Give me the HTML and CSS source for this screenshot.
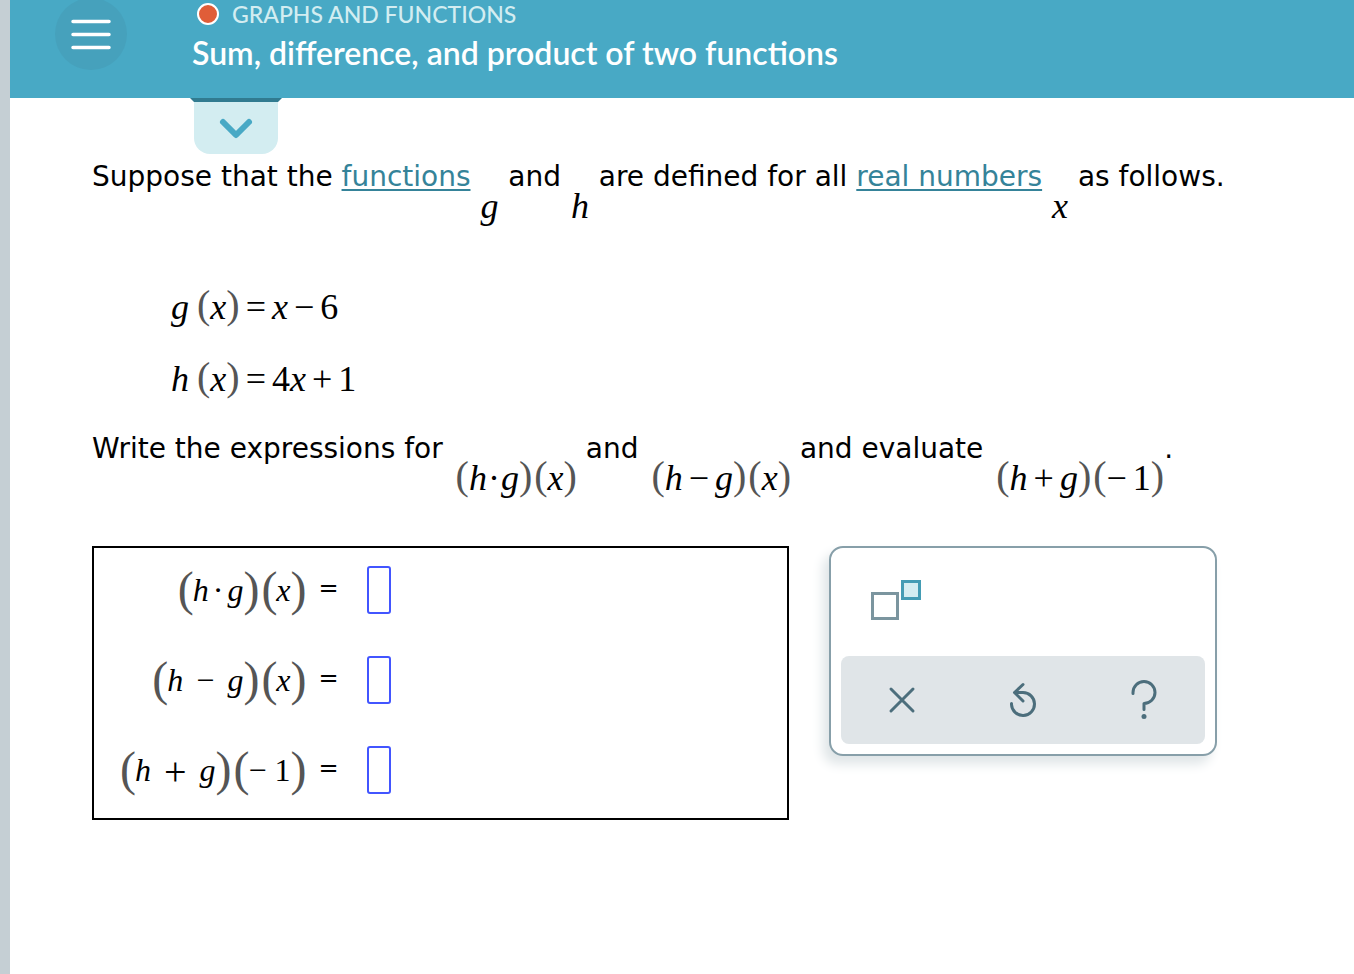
FILE: index.html
```html
<!DOCTYPE html>
<html lang="en">
<head>
    <meta charset="UTF-8">
    <meta name="viewport" content="width=device-width, initial-scale=1.0">
    <title>Sum, difference, and product of two functions</title>
    <link rel="stylesheet" href="styles.css">
</head>
<body>
    <!-- Top bar with menu and topic name -->
    <header class="topbar">
        <button class="menu-btn" type="button" aria-label="Menu">
            <svg width="40" height="32" viewBox="0 0 40 32" fill="none" stroke="#fff" stroke-width="3.500" stroke-linecap="round">
                <path d="M2 3.500h36M2 16.500h36M2 29.500h36"/>
            </svg>
        </button>
        <div class="heading">
            <div class="topic"><span class="dot"></span>GRAPHS AND FUNCTIONS</div>
            <h1 class="title">Sum, difference, and product of two functions</h1>
        </div>
    </header>

    <main class="content">
        <!-- Pull-down tab -->
        <button class="tab" type="button" aria-label="Show more">
            <svg width="92" height="56" viewBox="0 0 92 56">
                <path d="M4 2h84v38a16 16 0 0 1-16 16H20a16 16 0 0 1-16-16z" fill="#d3edf1"/>
                <path d="M0 0h92l-4 4H4z" fill="#317b90"/>
                <path d="M33 24l13 13 13-13" fill="none" stroke="#48a9c5" stroke-width="6" stroke-linecap="round" stroke-linejoin="round"/>
            </svg>
        </button>

        <p class="text">Suppose that the <a href="#functions">functions</a> <span class="math low var"><i>g</i></span> and <span class="math low var"><i>h</i></span> are defined for all <a href="#real-numbers">real numbers</a> <span class="math low var"><i>x</i></span> as follows.</p>

        <!-- Function definitions -->
        <div class="definitions">
            <div class="math"><i class="name">g</i><span class="paren">(</span><i>x</i><span class="paren">)</span><span class="op">=</span><i>x</i><span class="op">−</span>6</div>
            <div class="math"><i class="name">h</i><span class="paren">(</span><i>x</i><span class="paren">)</span><span class="op">=</span>4<i>x</i><span class="op">+</span>1</div>
        </div>

        <p class="text">Write the expressions for <span class="math low"><span class="paren">(</span><i>h</i><span class="times">·</span><i>g</i><span class="paren">)</span><span class="paren next">(</span><i>x</i><span class="paren">)</span></span> and <span class="math low"><span class="paren">(</span><i>h</i><span class="op">−</span><i>g</i><span class="paren">)</span><span class="paren next">(</span><i>x</i><span class="paren">)</span></span> and evaluate <span class="math low"><span class="paren">(</span><i>h</i><span class="op">+</span><i>g</i><span class="paren">)</span><span class="paren next">(</span><span class="sign">−</span>1<span class="paren">)</span></span>.</p>

        <div class="workspace">
            <!-- Answer fields -->
            <form class="answers">
                <label class="math" for="product"><span class="paren open">(</span><i>h</i><span class="times">·</span><i>g</i><span class="paren">)</span><span class="paren open next">(</span><i>x</i><span class="paren">)</span></label>
                <span class="equals">=</span>
                <input class="answer" id="product" type="text">

                <label class="math" for="difference"><span class="paren open">(</span><i>h</i><span class="op">−</span><i>g</i><span class="paren">)</span><span class="paren open next">(</span><i>x</i><span class="paren">)</span></label>
                <span class="equals">=</span>
                <input class="answer" id="difference" type="text">

                <label class="math" for="sum"><span class="paren open">(</span><i>h</i><span class="op plus">+</span><i>g</i><span class="paren">)</span><span class="paren open next">(</span><span class="sign">−</span>1<span class="paren">)</span></label>
                <span class="equals">=</span>
                <input class="answer" id="sum" type="text">
            </form>

            <!-- Input palette -->
            <aside class="palette">
                <button class="exponent" type="button" aria-label="Exponent">
                    <svg width="50" height="40" viewBox="0 0 50 40" stroke-width="3">
                        <rect x="1.500" y="13.500" width="25" height="25" fill="#fff" stroke="#7b959f"/>
                        <rect x="31.500" y="1.500" width="17" height="17" fill="#d3edf1" stroke="#439cb4"/>
                    </svg>
                </button>
                <div class="actions">
                    <button type="button" aria-label="Clear">
                        <svg width="40" height="44" viewBox="0 0 40 44"><path d="M9 11l22 22M31 11L9 33"/></svg>
                    </button>
                    <button type="button" aria-label="Undo">
                        <svg width="40" height="44" viewBox="0 0 40 44"><path d="M20 6.500l-8.500 8 8.500 8.500M11.500 14.500h8.500a11.500 11.500 0 1 1-11.500 12v-1"/></svg>
                    </button>
                    <button type="button" aria-label="Help">
                        <svg width="40" height="44" viewBox="0 0 40 44"><path d="M9 15.500v-1a11 11 0 1 1 11 11v6"/><circle class="point" cx="20" cy="38.500" r="2.500"/></svg>
                    </button>
                </div>
            </aside>
        </div>
    </main>
</body>
</html>
```
FILE: styles.css
```css
* {
    box-sizing: border-box;
}

body {
    margin: 0;
    min-height: 100vh;
    border-left: 10px solid #c5cfd4;
    background-color: #fff;
    color: #000;
    font-family: Verdana, "DejaVu Sans", sans-serif;
}

button {
    padding: 0;
    border: 0;
    background: none;
    cursor: pointer;
}

svg {
    display: block;
}

/* Top bar */
.topbar {
    display: flex;
    gap: 65px;
    height: 98px;
    padding-left: 45px;
    background-color: #48a9c5;
    font-family: Lato, sans-serif;
}

.menu-btn {
    display: flex;
    align-items: center;
    justify-content: center;
    width: 72px;
    height: 72px;
    margin-top: -2px;
    border-radius: 50%;
    background-color: #46a1bc;
}

.topic {
    display: flex;
    align-items: center;
    gap: 13px;
    height: 28px;
    padding-left: 5px;
    color: #d3edf1;
    font-size: 23px;
    font-weight: 500;
}

.dot {
    width: 22px;
    height: 22px;
    border: 2px solid #fff;
    border-radius: 50%;
    background-color: #e05d38;
}

.title {
    margin: 5px 0 0;
    color: #fff;
    font-size: 32px;
    font-weight: 600;
    line-height: 40px;
}

/* Question */
.content {
    padding: 0 82px;
}

.tab {
    display: block;
    margin-left: 98px;
}

.text {
    margin: 3px 0 0;
    font-size: 28px;
    line-height: 40px;
    white-space: nowrap;
}

.text a {
    color: #358399;
    text-decoration-thickness: 2px;
    text-underline-offset: 3px;
}

/* Formulas */
.math {
    font-family: "Liberation Serif", serif;
    font-size: 36px;
    white-space: nowrap;
}

.low {
    margin-left: 4px;
    vertical-align: -32px;
}

.var {
    margin: 0 1px;
}

.paren {
    color: #555;
    font-size: 40px;
    line-height: 1px;
    vertical-align: 1px;
}

.name {
    margin-right: 8px;
}

.op {
    margin: 0 6px;
}

.times {
    margin: 0 1px;
}

.sign {
    margin-right: 6px;
}

.next {
    margin-left: 2px;
}

.definitions {
    margin: 45px 0 14px 79px;
    line-height: 72px;
}

/* Answer area */
.workspace {
    display: flex;
    align-items: flex-start;
    gap: 40px;
    margin: 48px 55px 0 0;
}

.answers {
    display: grid;
    flex: 1;
    grid-template-columns: max-content max-content max-content;
    grid-auto-rows: 84px;
    align-items: center;
    row-gap: 6px;
    padding: 0 0 6px 26px;
    border: 2px solid #000;
}

.answers .math {
    justify-self: end;
    font-size: 32px;
}

.answers .paren {
    font-size: 48px;
    vertical-align: -4px;
}

.answers .open {
    margin-right: -1px;
}

.answers .op {
    margin: 0 13px;
}

.answers .plus {
    font-size: 40px;
    line-height: 1px;
    vertical-align: -4px;
}

.answers .times {
    margin: 0 4px;
}

.answers .sign {
    margin-right: 8px;
}

.equals {
    margin: 0 28px 0 12px;
    padding-bottom: 4px;
    font-size: 24px;
}

.answer {
    width: 24px;
    height: 48px;
    padding: 0;
    border: 2px solid #4255ff;
    border-radius: 3px;
    background-color: #fff;
    font-size: 24px;
}

/* Palette */
.palette {
    width: 388px;
    padding: 32px 10px 10px;
    border: 2px solid #879fa9;
    border-radius: 14px;
    background-color: #fff;
    box-shadow: -6px 8px 12px #dfe5e7;
}

.exponent {
    margin: 0 0 36px 30px;
}

.actions {
    display: grid;
    grid-template-columns: repeat(3, 1fr);
    height: 88px;
    border-radius: 8px;
    background-color: #e0e5e8;
}

.actions button {
    display: flex;
    align-items: center;
    justify-content: center;
}

.actions path {
    fill: none;
    stroke: #4c6e7c;
    stroke-width: 3;
    stroke-linecap: round;
    stroke-linejoin: round;
}

.point {
    fill: #4c6e7c;
}
```
